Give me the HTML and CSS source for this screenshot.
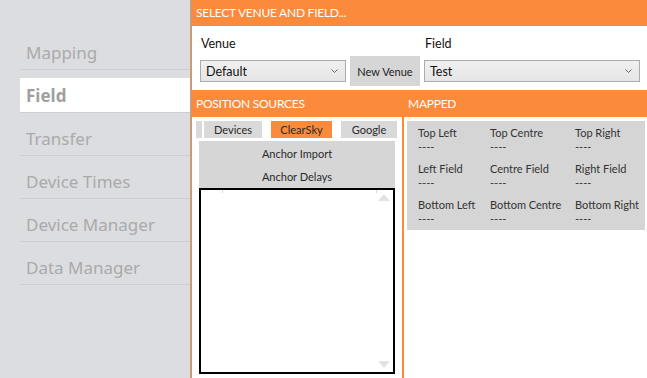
FILE: index.html
```html
<!DOCTYPE html>
<html>
<head>
<meta charset="utf-8">
<link rel="stylesheet" href="styles.css">
</head>
<body>
<nav class="sidebar">
  <div class="item"><span>Mapping</span></div>
  <div class="item active"><span>Field</span></div>
  <div class="item"><span>Transfer</span></div>
  <div class="item"><span>Device Times</span></div>
  <div class="item"><span>Device Manager</span></div>
  <div class="item"><span>Data Manager</span></div>
</nav>
<main class="main">
  <div class="hdr">SELECT VENUE AND FIELD...</div>
  <div class="venue">
    <div class="col col-venue">
      <div class="lbl">Venue</div>
      <div class="select"><span>Default</span><svg class="chev" width="7" height="4" viewBox="0 0 7 4"><path d="M0.5 0.5 L3.5 3.5 L6.5 0.5" fill="none" stroke="#666" stroke-width="1"/></svg></div>
    </div>
    <div class="btn">New Venue</div>
    <div class="col col-field">
      <div class="lbl">Field</div>
      <div class="select"><span>Test</span><svg class="chev" width="7" height="4" viewBox="0 0 7 4"><path d="M0.5 0.5 L3.5 3.5 L6.5 0.5" fill="none" stroke="#666" stroke-width="1"/></svg></div>
    </div>
  </div>
  <div class="sec-hdr">
    <div class="sec-left">POSITION SOURCES</div>
    <div class="sec-right">MAPPED</div>
  </div>
  <div class="panes">
    <div class="pane-left">
      <div class="tabs">
        <div class="tab stub"></div>
        <div class="tab t-dev">Devices</div>
        <div class="tab t-cs on">ClearSky</div>
        <div class="tab t-go">Google</div>
      </div>
      <div class="anchors">
        <div class="arow">Anchor Import</div>
        <div class="arow">Anchor Delays</div>
      </div>
      <div class="listbox">
        <span class="tick t1"></span><span class="tick t2"></span>
        <svg class="arr up" width="12" height="7" viewBox="0 0 12 7"><path d="M0 7 L6 0 L12 7 Z" fill="#e3e3e3"/></svg>
        <svg class="arr down" width="12" height="7" viewBox="0 0 12 7"><path d="M0 0 L6 7 L12 0 Z" fill="#e3e3e3"/></svg>
      </div>
    </div>
    <div class="pane-right">
      <div class="mapbox">
        <div class="cell"><div>Top Left</div><div>----</div></div>
        <div class="cell"><div>Top Centre</div><div>----</div></div>
        <div class="cell"><div>Top Right</div><div>----</div></div>
        <div class="cell"><div>Left Field</div><div>----</div></div>
        <div class="cell"><div>Centre Field</div><div>----</div></div>
        <div class="cell"><div>Right Field</div><div>----</div></div>
        <div class="cell"><div>Bottom Left</div><div>----</div></div>
        <div class="cell"><div>Bottom Centre</div><div>----</div></div>
        <div class="cell"><div>Bottom Right</div><div>----</div></div>
      </div>
    </div>
  </div>
</main>
</body>
</html>
```

FILE: styles.css
```css
* { box-sizing: border-box; }
html, body { margin: 0; padding: 0; }
body {
  width: 647px;
  height: 378px;
  overflow: hidden;
  display: flex;
  font-family: Lato, "Noto Sans", sans-serif;
  background: #fff;
}
.sidebar {
  width: 191px;
  flex: none;
  background: #dcdde1;
  border-right: 1px solid #a2a6b8;
  padding-top: 27px;
  font-family: "Noto Sans", "Open Sans", sans-serif;
}
.item {
  margin-left: 20px;
  height: 43px;
  padding-top: 8px;
  border-bottom: 1px solid #cdced3;
}
.item span {
  display: block;
  height: 34px;
  line-height: 36px;
  padding-left: 6px;
  font-size: 17px;
  color: #aaaaaa;
}
.item.active span {
  background: #fff;
  font-weight: bold;
  color: #a0a0a0;
}
.main {
  flex: 1;
  display: flex;
  flex-direction: column;
  border-left: 1px solid #fb8a3a;
}
.hdr {
  height: 26px;
  background: #fb8a3a;
  color: #fff;
  font-size: 12px;
  letter-spacing: -0.25px;
  line-height: 26px;
  padding-left: 4px;
}
.venue {
  height: 64px;
  display: flex;
  align-items: flex-start;
  padding-left: 8px;
}
.col { display: flex; flex-direction: column; }
.col-venue { width: 146px; }
.col-field { width: 216px; }
.lbl {
  font-size: 12.5px;
  line-height: 16px;
  margin-top: 10px;
  margin-bottom: 8px;
  padding-left: 1px;
  color: #111;
}
.select {
  height: 22px;
  border: 1px solid #acacac;
  background: linear-gradient(#f0f0f0, #e5e5e5);
  display: flex;
  align-items: center;
  justify-content: space-between;
  padding: 0 7px 0 5px;
  font-size: 12.5px;
  color: #111;
}
.btn {
  width: 70px;
  height: 30px;
  margin: 30px 4px 0 4px;
  background: #d6d6d6;
  font-size: 11px;
  color: #222;
  display: flex;
  align-items: center;
  justify-content: center;
}
.sec-hdr {
  height: 27px;
  background: #fb8a3a;
  color: #fff;
  font-size: 12px;
  letter-spacing: -0.25px;
  line-height: 27px;
  display: flex;
}
.sec-left { width: 212px; padding-left: 4px; }
.sec-right { padding-left: 4px; }
.panes {
  flex: 1;
  display: flex;
}
.pane-left {
  width: 212px;
  border-right: 2px solid #fb8a3a;
  padding-top: 4px;
}
.tabs {
  height: 17px;
  display: flex;
  padding-left: 4px;
}
.tab {
  background: #d9d9d9;
  font-size: 11px;
  line-height: 17px;
  text-align: center;
  color: #2a2a2a;
}
.stub { width: 6px; margin-right: 2px; }
.t-dev { width: 58px; margin-right: 9px; }
.t-cs { width: 61px; margin-right: 9px; }
.t-go { width: 56px; }
.tab.on { background: #fb8a3a; }
.anchors {
  margin: 3px 0 0 7px;
  width: 196px;
  height: 47px;
  background: #d6d6d6;
  padding-top: 1px;
}
.arow {
  height: 23px;
  line-height: 23px;
  text-align: center;
  font-size: 11px;
  color: #2a2a2a;
}
.listbox {
  position: relative;
  margin-left: 7px;
  width: 196px;
  height: 186px;
  border: 2px solid #000;
}
.tick {
  position: absolute;
  top: 0;
  width: 1px;
  height: 3px;
  background: #d8d8d8;
}
.t1 { left: 21px; }
.t2 { right: 16px; }
.arr { position: absolute; right: 3px; }
.arr.up { top: 4px; }
.arr.down { bottom: 4px; }
.pane-right { flex: 1; padding: 4px 2px 0 3px; }
.mapbox {
  height: 109px;
  background: #d5d5d5;
  display: grid;
  grid-template-columns: 72px 85px 1fr;
  row-gap: 8px;
  padding: 5px 0 0 11px;
  align-content: start;
}
.cell div {
  font-size: 11px;
  line-height: 14px;
  color: #333;
}
```
